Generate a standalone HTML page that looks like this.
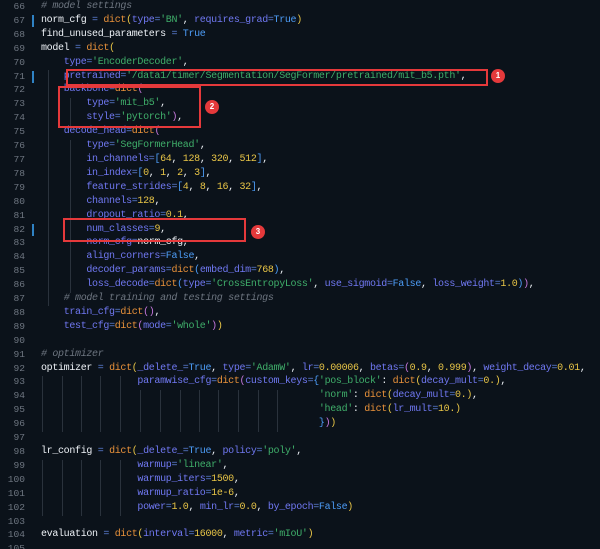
<!DOCTYPE html>
<html><head><meta charset="utf-8"><style>
html,body{margin:0;padding:0;background:#0b121a;width:600px;height:549px;overflow:hidden;position:relative}
pre{margin:0;position:absolute;top:0;left:0;font-family:"Liberation Mono",monospace;font-size:10px;letter-spacing:-0.33px;line-height:13.9px;color:#eef2f7}
.ln{position:absolute;left:0;top:0;width:25px;text-align:right;color:#6e7681;letter-spacing:0;font-size:9.6px}
.code{left:41px}
.k{color:#7078f2}.s{color:#3fae6a}.n{color:#e8c547}.f{color:#e8913a}.b{color:#4d9df8}.c{color:#6e7681;font-style:italic}.o{color:#5b7fd6}.p{color:#c678dd}
.box{position:absolute;border:2px solid #e5393b;box-sizing:border-box}
.dot{position:absolute;width:14px;height:14px;border-radius:50%;background:#e5393b;color:#fff;font:bold 8px "Liberation Sans",sans-serif;text-align:center;line-height:14px}
.g{position:absolute;width:1px;background:#2a323c}
.m{position:absolute;left:32px;width:2px;background:#2f82c4}
</style></head><body>
<div class="m" style="top:15px;height:12px"></div>
<div class="m" style="top:71px;height:12px"></div>
<div class="m" style="top:224px;height:12px"></div>
<div class="g" style="left:48px;top:70px;height:236px"></div>
<div class="g" style="left:70px;top:98px;height:28px"></div>
<div class="g" style="left:70px;top:140px;height:153px"></div>
<div class="g" style="left:42px;top:376px;height:56px"></div>
<div class="g" style="left:62px;top:376px;height:56px"></div>
<div class="g" style="left:81px;top:376px;height:56px"></div>
<div class="g" style="left:100px;top:376px;height:56px"></div>
<div class="g" style="left:120px;top:376px;height:56px"></div>
<div class="g" style="left:140px;top:390px;height:42px"></div>
<div class="g" style="left:160px;top:390px;height:42px"></div>
<div class="g" style="left:180px;top:390px;height:42px"></div>
<div class="g" style="left:199px;top:390px;height:42px"></div>
<div class="g" style="left:218px;top:390px;height:42px"></div>
<div class="g" style="left:238px;top:390px;height:42px"></div>
<div class="g" style="left:258px;top:390px;height:42px"></div>
<div class="g" style="left:277px;top:390px;height:42px"></div>
<div class="g" style="left:42px;top:460px;height:56px"></div>
<div class="g" style="left:62px;top:460px;height:56px"></div>
<div class="g" style="left:81px;top:460px;height:56px"></div>
<div class="g" style="left:100px;top:460px;height:56px"></div>
<div class="g" style="left:120px;top:460px;height:56px"></div>
<pre class="ln">66
67
68
69
70
71
72
73
74
75
76
77
78
79
80
81
82
83
84
85
86
87
88
89
90
91
92
93
94
95
96
97
98
99
100
101
102
103
104
105</pre>
<pre class="code"><span class="c"># model settings</span>
norm_cfg <span class="o">=</span> <span class="f">dict</span><span class="n">(</span><span class="k">type</span><span class="o">=</span><span class="s">'BN'</span>, <span class="k">requires_grad</span><span class="o">=</span><span class="b">True</span><span class="n">)</span>
find_unused_parameters <span class="o">=</span> <span class="b">True</span>
model <span class="o">=</span> <span class="f">dict</span><span class="n">(</span>
    <span class="k">type</span><span class="o">=</span><span class="s">'EncoderDecoder'</span>,
    <span class="k">pretrained</span><span class="o">=</span><span class="s">'/data1/timer/Segmentation/SegFormer/pretrained/mit_b5.pth'</span>,
    <span class="k">backbone</span><span class="o">=</span><span class="f">dict</span><span class="p">(</span>
        <span class="k">type</span><span class="o">=</span><span class="s">'mit_b5'</span>,
        <span class="k">style</span><span class="o">=</span><span class="s">'pytorch'</span><span class="p">)</span>,
    <span class="k">decode_head</span><span class="o">=</span><span class="f">dict</span><span class="p">(</span>
        <span class="k">type</span><span class="o">=</span><span class="s">'SegFormerHead'</span>,
        <span class="k">in_channels</span><span class="o">=</span><span class="b">[</span><span class="n">64</span>, <span class="n">128</span>, <span class="n">320</span>, <span class="n">512</span><span class="b">]</span>,
        <span class="k">in_index</span><span class="o">=</span><span class="b">[</span><span class="n">0</span>, <span class="n">1</span>, <span class="n">2</span>, <span class="n">3</span><span class="b">]</span>,
        <span class="k">feature_strides</span><span class="o">=</span><span class="b">[</span><span class="n">4</span>, <span class="n">8</span>, <span class="n">16</span>, <span class="n">32</span><span class="b">]</span>,
        <span class="k">channels</span><span class="o">=</span><span class="n">128</span>,
        <span class="k">dropout_ratio</span><span class="o">=</span><span class="n">0.1</span>,
        <span class="k">num_classes</span><span class="o">=</span><span class="n">9</span>,
        <span class="k">norm_cfg</span><span class="o">=</span>norm_cfg,
        <span class="k">align_corners</span><span class="o">=</span><span class="b">False</span>,
        <span class="k">decoder_params</span><span class="o">=</span><span class="f">dict</span><span class="b">(</span><span class="k">embed_dim</span><span class="o">=</span><span class="n">768</span><span class="b">)</span>,
        <span class="k">loss_decode</span><span class="o">=</span><span class="f">dict</span><span class="b">(</span><span class="k">type</span><span class="o">=</span><span class="s">'CrossEntropyLoss'</span>, <span class="k">use_sigmoid</span><span class="o">=</span><span class="b">False</span>, <span class="k">loss_weight</span><span class="o">=</span><span class="n">1.0</span><span class="b">)</span><span class="p">)</span>,
    <span class="c"># model training and testing settings</span>
    <span class="k">train_cfg</span><span class="o">=</span><span class="f">dict</span><span class="p">()</span>,
    <span class="k">test_cfg</span><span class="o">=</span><span class="f">dict</span><span class="p">(</span><span class="k">mode</span><span class="o">=</span><span class="s">'whole'</span><span class="p">)</span><span class="n">)</span>

<span class="c"># optimizer</span>
optimizer <span class="o">=</span> <span class="f">dict</span><span class="n">(</span><span class="k">_delete_</span><span class="o">=</span><span class="b">True</span>, <span class="k">type</span><span class="o">=</span><span class="s">'AdamW'</span>, <span class="k">lr</span><span class="o">=</span><span class="n">0.00006</span>, <span class="k">betas</span><span class="o">=</span><span class="p">(</span><span class="n">0.9</span>, <span class="n">0.999</span><span class="p">)</span>, <span class="k">weight_decay</span><span class="o">=</span><span class="n">0.01</span>,
                 <span class="k">paramwise_cfg</span><span class="o">=</span><span class="f">dict</span><span class="p">(</span><span class="k">custom_keys</span><span class="o">=</span><span class="b">{</span><span class="s">'pos_block'</span>: <span class="f">dict</span><span class="n">(</span><span class="k">decay_mult</span><span class="o">=</span><span class="n">0.</span><span class="n">)</span>,
                                                 <span class="s">'norm'</span>: <span class="f">dict</span><span class="n">(</span><span class="k">decay_mult</span><span class="o">=</span><span class="n">0.</span><span class="n">)</span>,
                                                 <span class="s">'head'</span>: <span class="f">dict</span><span class="n">(</span><span class="k">lr_mult</span><span class="o">=</span><span class="n">10.</span><span class="n">)</span>
                                                 <span class="b">}</span><span class="p">)</span><span class="n">)</span>

lr_config <span class="o">=</span> <span class="f">dict</span><span class="n">(</span><span class="k">_delete_</span><span class="o">=</span><span class="b">True</span>, <span class="k">policy</span><span class="o">=</span><span class="s">'poly'</span>,
                 <span class="k">warmup</span><span class="o">=</span><span class="s">'linear'</span>,
                 <span class="k">warmup_iters</span><span class="o">=</span><span class="n">1500</span>,
                 <span class="k">warmup_ratio</span><span class="o">=</span><span class="n">1e-6</span>,
                 <span class="k">power</span><span class="o">=</span><span class="n">1.0</span>, <span class="k">min_lr</span><span class="o">=</span><span class="n">0.0</span>, <span class="k">by_epoch</span><span class="o">=</span><span class="b">False</span><span class="n">)</span>

evaluation <span class="o">=</span> <span class="f">dict</span><span class="n">(</span><span class="k">interval</span><span class="o">=</span><span class="n">16000</span>, <span class="k">metric</span><span class="o">=</span><span class="s">'mIoU'</span><span class="n">)</span>
</pre>
<div class="box" style="left:66px;top:69px;width:422px;height:17px"></div>
<div class="dot" style="left:491px;top:69px">1</div>
<div class="box" style="left:58px;top:86px;width:143px;height:42px"></div>
<div class="dot" style="left:205px;top:100px">2</div>
<div class="box" style="left:63px;top:218px;width:183px;height:24px"></div>
<div class="dot" style="left:251px;top:225px">3</div>
</body></html>
